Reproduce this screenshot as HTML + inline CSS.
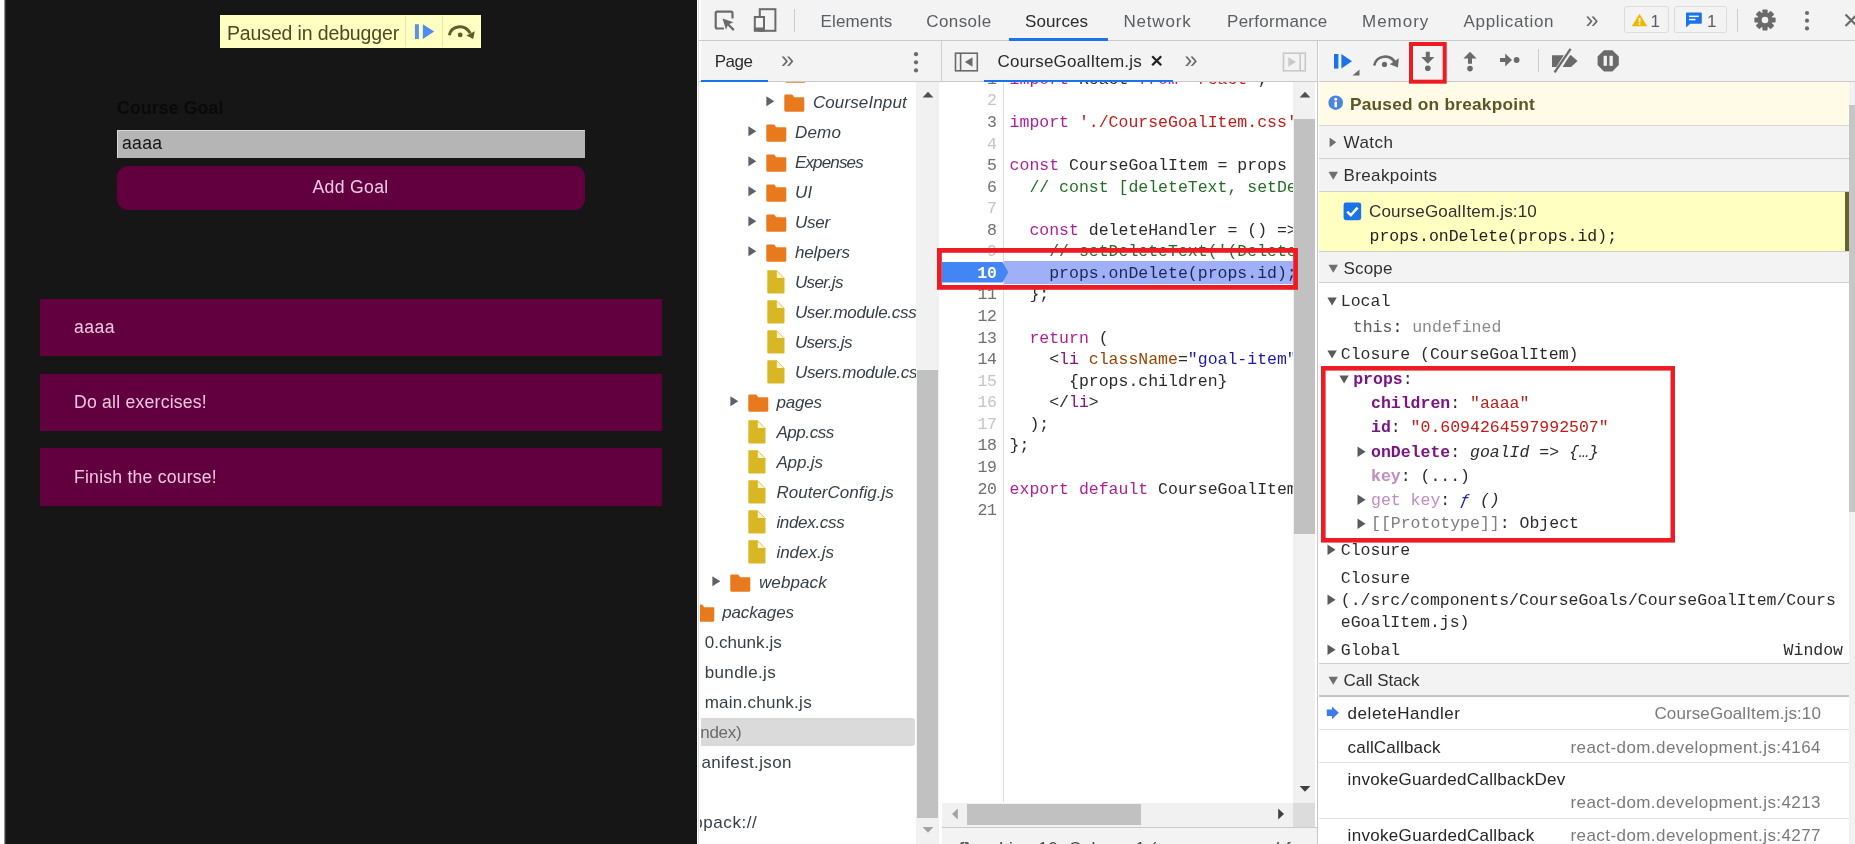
<!DOCTYPE html>
<html lang="en"><head><meta charset="utf-8"><title>DevTools - Paused in debugger</title>
<style>
html,body{margin:0;padding:0;background:#fff;}
body{width:1855px;height:844px;overflow:hidden;position:relative;}
.L{position:absolute;overflow:hidden;will-change:transform;}
.I{position:absolute;width:1855px;height:844px;}
.I>div,.I>svg,.I>span{position:absolute;}
.t{line-height:0;white-space:pre;}
</style></head>
<body>
<div class="L" style="left:0px;top:0px;width:697px;height:844px;"><div class="I" style="left:0px;top:0px">
<div style="left:0px;top:0px;width:697px;height:844px;background:#161616;"></div>
<div style="left:0px;top:0px;width:3.5px;height:844px;background:#ffffff;"></div>
<div style="left:3.5px;top:0px;width:2px;height:844px;background:linear-gradient(90deg,#bbb,#0a0a0a);"></div>
<div style="left:220px;top:15px;width:261px;height:33px;background:#ffffc2;"></div>
<div style="left:405.2px;top:16px;width:1px;height:31px;background:#e6e6b2;"></div>
<div style="left:442.2px;top:16px;width:1px;height:31px;background:#e6e6b2;"></div>
<span class="t" style="top:33.42px;font:19.5px/0 'Liberation Sans',sans-serif;color:#4a4a24;left:227px;letter-spacing:-0.142px;">Paused in debugger</span>
<svg style="left:413px;top:24px;" width="24" height="16" viewBox="0 0 24 16"><rect x="1.9" y="0.2" width="4" height="14.8" fill="#5a92e4"/><path d="M9.8 0.2 L21.2 7.6 L9.8 15 Z" fill="#4f8ef0"/></svg>
<svg style="left:447px;top:23px;" width="30" height="18" viewBox="0 0 30 18"><path d="M2.3 12.2 C4 3.4 17 -0.2 23.3 10.2" fill="none" stroke="#5f5c2e" stroke-width="3"/><path d="M27.8 8.2 L26.2 16 L19.4 12.6 Z" fill="#5f5c2e"/><circle cx="13.2" cy="11.9" r="2.4" fill="#5f5c2e"/></svg>
<span class="t" style="top:108.18px;font:bold 17.6px/0 'Liberation Sans',sans-serif;color:#0a0a0a;left:117px;letter-spacing:0.172px;">Course Goal</span>
<div style="left:117px;top:129.5px;width:468px;height:28.5px;background:#b5b5b5;box-shadow:inset 1px 1px 0 #d8d8d8;"></div>
<span class="t" style="top:143.18px;font:17.6px/0 'Liberation Sans',sans-serif;color:#151515;left:122px;letter-spacing:0.340px;">aaaa</span>
<div style="left:117px;top:166px;width:468px;height:43.5px;background:#62003f;border-radius:11px;"></div>
<span class="t" style="top:186.93px;font:17.6px/0 'Liberation Sans',sans-serif;color:#f2cbe6;left:312.5px;letter-spacing:0.330px;">Add Goal</span>
<div style="left:39.8px;top:298.8px;width:622.6px;height:56.8px;background:#62003f;"></div>
<span class="t" style="top:327.23px;font:17.6px/0 'Liberation Sans',sans-serif;color:#eec6e0;left:74px;letter-spacing:0.465px;">aaaa</span>
<div style="left:39.8px;top:373.6px;width:622.6px;height:57.2px;background:#62003f;"></div>
<span class="t" style="top:402.03px;font:17.6px/0 'Liberation Sans',sans-serif;color:#eec6e0;left:74px;letter-spacing:0.231px;">Do all exercises!</span>
<div style="left:39.8px;top:448.4px;width:622.6px;height:57.6px;background:#62003f;"></div>
<span class="t" style="top:476.83px;font:17.6px/0 'Liberation Sans',sans-serif;color:#eec6e0;left:74px;letter-spacing:0.229px;">Finish the course!</span>
</div></div>
<div class="L" style="left:697px;top:0px;width:1158px;height:844px;"><div class="I" style="left:-697px;top:0px">
<div style="left:697px;top:0px;width:1158px;height:844px;background:#ffffff;"></div>
<div style="left:698.4px;top:0px;width:1px;height:844px;background:#dcdcdc;"></div>
<div style="left:701px;top:0px;width:1154px;height:40px;background:#f3f3f3;"></div>
<div style="left:699px;top:40px;width:1156px;height:1px;background:#cacaca;"></div>
<div style="left:701px;top:41px;width:240px;height:40px;background:#f3f3f3;"></div>
<div style="left:942px;top:41px;width:375px;height:40px;background:#f3f3f3;"></div>
<div style="left:1319px;top:41px;width:536px;height:41px;background:#f3f3f3;"></div>
<div style="left:699px;top:81px;width:618px;height:1px;background:#cacaca;"></div>
<div style="left:1319px;top:81px;width:536px;height:1px;background:#cacaca;"></div>
<div style="left:941px;top:41px;width:1px;height:803px;background:#cfcfcf;"></div>
<div style="left:1316.6px;top:41px;width:1.2px;height:803px;background:#c6c6c6;"></div>
<svg style="left:713px;top:9px;" width="24" height="23" viewBox="0 0 24 23"><path d="M11 19.5 H4.2 Q2.7 19.5 2.7 18 V4.2 Q2.7 2.7 4.2 2.7 H18 Q19.5 2.7 19.5 4.2 V9.5" fill="none" stroke="#6a6a6a" stroke-width="2.2"/><path d="M9.5 9.5 L20.5 13.2 L16.3 15 L21.6 20.3 L20 21.9 L14.7 16.6 L13 20.8 Z" fill="#6a6a6a"/></svg>
<svg style="left:753px;top:7px;" width="25" height="26" viewBox="0 0 25 26"><rect x="6.8" y="2.2" width="15.6" height="21.6" fill="none" stroke="#6a6a6a" stroke-width="2"/><rect x="1.8" y="10" width="9.2" height="13.8" fill="#f3f3f3" stroke="#6a6a6a" stroke-width="2"/><rect x="1.8" y="20.5" width="9.2" height="3.3" fill="#6a6a6a"/></svg>
<div style="left:793.5px;top:9px;width:1px;height:22.5px;background:#cccccc;"></div>
<span class="t" style="top:21.62px;font:17px/0 'Liberation Sans',sans-serif;color:#5a5d62;left:820.5px;letter-spacing:0.141px;">Elements</span>
<span class="t" style="top:21.62px;font:17px/0 'Liberation Sans',sans-serif;color:#5a5d62;left:926.25px;letter-spacing:0.411px;">Console</span>
<span class="t" style="top:21.62px;font:17px/0 'Liberation Sans',sans-serif;color:#5a5d62;left:1123.5px;letter-spacing:0.806px;">Network</span>
<span class="t" style="top:21.62px;font:17px/0 'Liberation Sans',sans-serif;color:#5a5d62;left:1227px;letter-spacing:0.288px;">Performance</span>
<span class="t" style="top:21.62px;font:17px/0 'Liberation Sans',sans-serif;color:#5a5d62;left:1362px;letter-spacing:0.974px;">Memory</span>
<span class="t" style="top:21.62px;font:17px/0 'Liberation Sans',sans-serif;color:#5a5d62;left:1463.5px;letter-spacing:0.689px;">Application</span>
<span class="t" style="top:21.62px;font:17px/0 'Liberation Sans',sans-serif;color:#2b2b2b;left:1025px;letter-spacing:0.118px;">Sources</span>
<div style="left:1008.5px;top:37.5px;width:99.5px;height:3px;background:#1a73e8;"></div>
<span class="t" style="top:19.86px;font:23.5px/0 'Liberation Sans',sans-serif;color:#6a6a6a;left:1585.5px;">»</span>
<div style="left:1623.5px;top:6px;width:45.5px;height:27px;background:#f3f3f3;border:1px solid #dcdcdc;border-radius:3px;box-sizing:border-box;"></div>
<svg style="left:1630.5px;top:13px;" width="18" height="14" viewBox="0 0 18 14"><path d="M8.5 0.8 L16.2 13.2 H0.8 Z" fill="#f2b600"/><rect x="7.7" y="5" width="1.7" height="4.3" fill="#fff"/><rect x="7.7" y="10.2" width="1.7" height="1.6" fill="#fff"/></svg>
<span class="t" style="top:21.62px;font:17px/0 'Liberation Sans',sans-serif;color:#5a5d62;left:1650.5px;">1</span>
<div style="left:1674px;top:6px;width:53px;height:27px;background:#f3f3f3;border:1px solid #dcdcdc;border-radius:3px;box-sizing:border-box;"></div>
<svg style="left:1685px;top:12px;" width="18" height="16" viewBox="0 0 18 16"><path d="M1 1.5 Q1 0.5 2 0.5 H15.8 Q16.8 0.5 16.8 1.5 V10.8 Q16.8 11.8 15.8 11.8 H5.2 L1 15.4 Z" fill="#1a73e8"/><rect x="4" y="3.6" width="9.8" height="1.5" fill="#fff"/><rect x="4" y="6.8" width="6.5" height="1.5" fill="#fff"/></svg>
<span class="t" style="top:21.62px;font:17px/0 'Liberation Sans',sans-serif;color:#5a5d62;left:1707px;">1</span>
<div style="left:1736.5px;top:9px;width:1px;height:22.5px;background:#cccccc;"></div>
<svg style="left:1753.7px;top:9px;" width="22" height="22" viewBox="0 0 22 22"><g transform="translate(11,11)"><rect x="-2.6" y="-10.6" width="5.2" height="6" rx="0.8" fill="#6a6a6a" transform="rotate(0)"/><rect x="-2.6" y="-10.6" width="5.2" height="6" rx="0.8" fill="#6a6a6a" transform="rotate(45)"/><rect x="-2.6" y="-10.6" width="5.2" height="6" rx="0.8" fill="#6a6a6a" transform="rotate(90)"/><rect x="-2.6" y="-10.6" width="5.2" height="6" rx="0.8" fill="#6a6a6a" transform="rotate(135)"/><rect x="-2.6" y="-10.6" width="5.2" height="6" rx="0.8" fill="#6a6a6a" transform="rotate(180)"/><rect x="-2.6" y="-10.6" width="5.2" height="6" rx="0.8" fill="#6a6a6a" transform="rotate(225)"/><rect x="-2.6" y="-10.6" width="5.2" height="6" rx="0.8" fill="#6a6a6a" transform="rotate(270)"/><rect x="-2.6" y="-10.6" width="5.2" height="6" rx="0.8" fill="#6a6a6a" transform="rotate(315)"/><circle r="7.6" fill="#6a6a6a"/><circle r="3.3" fill="#f3f3f3"/></g></svg>
<svg style="left:1803px;top:9px;" width="8" height="24" viewBox="0 0 8 24"><circle cx="4" cy="4" r="2.1" fill="#6a6a6a"/><circle cx="4" cy="11.7" r="2.1" fill="#6a6a6a"/><circle cx="4" cy="19.4" r="2.1" fill="#6a6a6a"/></svg>
<svg style="left:1843px;top:12px;" width="14" height="16" viewBox="0 0 14 16"><path d="M2.5 2.5 L14 14 M14 2.5 L2.5 14" stroke="#6a6a6a" stroke-width="2.2" fill="none"/></svg>
<span class="t" style="top:62.42px;font:17px/0 'Liberation Sans',sans-serif;color:#2b2b2b;left:714.8px;letter-spacing:-0.551px;">Page</span>
<div style="left:700.5px;top:79.5px;width:67.5px;height:2.5px;background:#1a73e8;"></div>
<span class="t" style="top:60.16px;font:23.5px/0 'Liberation Sans',sans-serif;color:#6a6a6a;left:781px;">»</span>
<svg style="left:912px;top:49.5px;" width="8" height="24" viewBox="0 0 8 24"><circle cx="4" cy="4.2" r="2.1" fill="#6a6a6a"/><circle cx="4" cy="12.3" r="2.1" fill="#6a6a6a"/><circle cx="4" cy="20.4" r="2.1" fill="#6a6a6a"/></svg>
<svg style="left:954px;top:51.5px;" width="25" height="20" viewBox="0 0 25 20"><rect x="1.5" y="1.2" width="21.8" height="17.6" fill="none" stroke="#6a6a6a" stroke-width="1.6"/><path d="M6.6 1.2 V18.8" stroke="#6a6a6a" stroke-width="1.6"/><path d="M18.5 5.2 V14.8 L10.8 10 Z" fill="#6a6a6a"/></svg>
<span class="t" style="top:62.42px;font:17px/0 'Liberation Sans',sans-serif;color:#2b2b2b;left:997.5px;letter-spacing:0.219px;">CourseGoalItem.js</span>
<svg style="left:1150px;top:54px;" width="14" height="14" viewBox="0 0 14 14"><path d="M2.2 2.2 L11.2 11.2 M11.2 2.2 L2.2 11.2" stroke="#222" stroke-width="2.3" fill="none"/></svg>
<div style="left:983.5px;top:79.5px;width:189px;height:2.5px;background:#1a73e8;"></div>
<span class="t" style="top:60.16px;font:23.5px/0 'Liberation Sans',sans-serif;color:#6a6a6a;left:1184.5px;">»</span>
<svg style="left:1282px;top:51.5px;" width="25" height="20" viewBox="0 0 25 20"><rect x="1.5" y="1.2" width="21.8" height="17.6" fill="none" stroke="#c8c8c8" stroke-width="1.6"/><path d="M18.2 1.2 V18.8" stroke="#c8c8c8" stroke-width="1.6"/><path d="M6.3 5.2 V14.8 L14 10 Z" fill="#c8c8c8"/></svg>
<svg style="left:1332px;top:52px;" width="30" height="26" viewBox="0 0 30 26"><rect x="2" y="2" width="4.4" height="14.6" fill="#1a73e8"/><path d="M9.4 2 L20 9.3 L9.4 16.6 Z" fill="#1a73e8"/><path d="M27.5 17.5 V23.5 H20.5 Z" fill="#6a6a6a"/></svg>
<svg style="left:1371px;top:51px;" width="30" height="20" viewBox="0 0 30 20"><path d="M3.2 14.5 C5.5 4 19.5 2.5 24.3 12" fill="none" stroke="#6a6a6a" stroke-width="2.7"/><path d="M27.8 7.2 L27 16.4 L18.8 13.2 Z" fill="#6a6a6a"/><circle cx="13.5" cy="13.4" r="2.6" fill="#6a6a6a"/></svg>
<svg style="left:1420px;top:51px;" width="16" height="22" viewBox="0 0 16 22"><path d="M5.8 0.8 H9.8 V6 H14.4 L7.8 12.8 L1.2 6 H5.8 Z" fill="#6a6a6a"/><circle cx="7.8" cy="17.3" r="2.8" fill="#6a6a6a"/></svg>
<svg style="left:1462px;top:51px;" width="16" height="22" viewBox="0 0 16 22"><path d="M6 12.8 H10 V7.6 H14.6 L8 0.8 L1.4 7.6 H6 Z" fill="#6a6a6a"/><circle cx="8" cy="17.6" r="2.8" fill="#6a6a6a"/></svg>
<svg style="left:1498px;top:52px;" width="24" height="16" viewBox="0 0 24 16"><path d="M2 6 H7.2 V1.6 L14 8 L7.2 14.4 V10 H2 Z" fill="#6a6a6a"/><circle cx="18.6" cy="8" r="2.9" fill="#6a6a6a"/></svg>
<div style="left:1537.5px;top:48.5px;width:1px;height:23px;background:#cccccc;"></div>
<svg style="left:1550px;top:47px;" width="30" height="27" viewBox="0 0 30 27"><path d="M2 8.2 H21 L27.6 14.1 L21 20 H2 Z" fill="#6a6a6a"/><path d="M21.5 0.8 L5.5 26.2" stroke="#f3f3f3" stroke-width="5.2"/><path d="M20.6 1.8 L4.6 25.4" stroke="#6a6a6a" stroke-width="2.3"/></svg>
<svg style="left:1596px;top:49px;" width="24" height="24" viewBox="0 0 24 24"><path d="M8 1.2 H16.4 L22.8 7.6 V16 L16.4 22.4 H8 L1.6 16 V7.6 Z" fill="#6a6a6a"/><rect x="7.6" y="6.8" width="3.3" height="10" fill="#f3f3f3"/><rect x="13.5" y="6.8" width="3.3" height="10" fill="#f3f3f3"/></svg>
</div></div>
<div class="L" style="left:1319px;top:82px;width:536px;height:762px;"><div class="I" style="left:-1319px;top:-82px">
<div style="left:1319px;top:82px;width:536px;height:762px;background:#ffffff;"></div>
<div style="left:1848.5px;top:82px;width:6.5px;height:762px;background:#f1f1f1;"></div>
<div style="left:1848.5px;top:105px;width:6.5px;height:407px;background:#c6c6c6;"></div>
<div style="left:1319px;top:82px;width:529.5px;height:42.5px;background:#fffbe6;"></div>
<div style="left:1319px;top:124.5px;width:529.5px;height:1px;background:#d8d8d8;"></div>
<svg style="left:1327.5px;top:94.8px;" width="16" height="16" viewBox="0 0 16 16"><circle cx="7.7" cy="7.7" r="7.3" fill="#4a86e0"/><rect x="6.5" y="6.6" width="2.5" height="5.6" fill="#fff"/><circle cx="7.75" cy="4.2" r="1.45" fill="#fff"/></svg>
<span class="t" style="top:103.52px;font:bold 17.3px/0 'Liberation Sans',sans-serif;color:#5c5625;left:1350px;letter-spacing:0.223px;">Paused on breakpoint</span>
<div style="left:1319px;top:125.5px;width:529.5px;height:32.5px;background:#f3f3f3;"></div>
<div style="left:1319px;top:158px;width:529.5px;height:1px;background:#cfcfcf;"></div>
<svg style="left:1329px;top:137.25px;" width="8" height="11" viewBox="0 0 8 11"><path d="M0.6 0.5 V10.2 L7.2 5.35 Z" fill="#6e6e6e"/></svg>
<span class="t" style="top:143.37px;font:17px/0 'Liberation Sans',sans-serif;color:#303030;left:1343.5px;letter-spacing:0.491px;">Watch</span>
<div style="left:1319px;top:159px;width:529.5px;height:32px;background:#f3f3f3;"></div>
<div style="left:1319px;top:191px;width:529.5px;height:1px;background:#cfcfcf;"></div>
<svg style="left:1328px;top:171.25px;" width="11" height="9" viewBox="0 0 11 9"><path d="M0.5 0.8 H10 L5.25 8.8 Z" fill="#6e6e6e"/></svg>
<span class="t" style="top:176.37px;font:17px/0 'Liberation Sans',sans-serif;color:#303030;left:1343.5px;letter-spacing:0.384px;">Breakpoints</span>
<div style="left:1319px;top:192px;width:529.5px;height:58.5px;background:#ffffc2;"></div>
<div style="left:1844.75px;top:192px;width:3.75px;height:58.5px;background:#6b6130;"></div>
<div style="left:1319px;top:250.5px;width:529.5px;height:1px;background:#cfcfcf;"></div>
<svg style="left:1342.5px;top:201.5px;" width="19" height="19" viewBox="0 0 19 19"><rect x="0.6" y="0.6" width="17.6" height="17.6" rx="2.4" fill="#1a73e8"/><path d="M4.2 9.6 L7.8 13.2 L14.6 5.6" fill="none" stroke="#fff" stroke-width="2.4"/></svg>
<span class="t" style="top:211.82px;font:17px/0 'Liberation Sans',sans-serif;color:#303030;left:1369px;letter-spacing:0.180px;">CourseGoalItem.js:10</span>
<span class="t" style="top:236.61px;font:16.5px/0 'Liberation Mono',monospace;color:#222;left:1369.5px;">props.onDelete(props.id);</span>
<div style="left:1319px;top:252px;width:529.5px;height:30.3px;background:#f3f3f3;"></div>
<div style="left:1319px;top:282.3px;width:529.5px;height:1px;background:#cfcfcf;"></div>
<svg style="left:1328px;top:264.25px;" width="11" height="9" viewBox="0 0 11 9"><path d="M0.5 0.8 H10 L5.25 8.8 Z" fill="#6e6e6e"/></svg>
<span class="t" style="top:269.37px;font:17px/0 'Liberation Sans',sans-serif;color:#303030;left:1343.5px;letter-spacing:0.159px;">Scope</span>
<svg style="left:1326.8px;top:297.45px;" width="11" height="9" viewBox="0 0 11 9"><path d="M0.4 0.6 H9.8 L5.1 8.4 Z" fill="#5a5a5a"/></svg>
<span class="t" style="top:302.36px;font:16.5px/0 'Liberation Mono',monospace;color:#2b2b2b;left:1340.8px;">Local</span>
<span class="t" style="top:328.36px;font:16.5px/0 'Liberation Mono',monospace;color:#5a5a5a;left:1352.8px;">this</span>
<span class="t" style="top:328.36px;font:16.5px/0 'Liberation Mono',monospace;color:#2b2b2b;left:1392.41px;">: </span>
<span class="t" style="top:328.36px;font:16.5px/0 'Liberation Mono',monospace;color:#8a8a8a;left:1412.21px;">undefined</span>
<svg style="left:1326.8px;top:349.7px;" width="11" height="9" viewBox="0 0 11 9"><path d="M0.4 0.6 H9.8 L5.1 8.4 Z" fill="#5a5a5a"/></svg>
<span class="t" style="top:354.61px;font:16.5px/0 'Liberation Mono',monospace;color:#2b2b2b;left:1340.8px;">Closure (CourseGoalItem)</span>
<svg style="left:1338.6px;top:375.45px;" width="11" height="9" viewBox="0 0 11 9"><path d="M0.4 0.6 H9.8 L5.1 8.4 Z" fill="#5a5a5a"/></svg>
<span class="t" style="top:380.36px;font:bold 16.5px/0 'Liberation Mono',monospace;color:#7b1285;left:1353.2px;">props</span>
<span class="t" style="top:380.36px;font:16.5px/0 'Liberation Mono',monospace;color:#2b2b2b;left:1402.71px;">:</span>
<span class="t" style="top:404.11px;font:bold 16.5px/0 'Liberation Mono',monospace;color:#7b1285;left:1371px;">children</span>
<span class="t" style="top:404.11px;font:16.5px/0 'Liberation Mono',monospace;color:#2b2b2b;left:1450.21px;">: </span>
<span class="t" style="top:404.11px;font:16.5px/0 'Liberation Mono',monospace;color:#c41a16;left:1470.02px;">"aaaa"</span>
<span class="t" style="top:428.11px;font:bold 16.5px/0 'Liberation Mono',monospace;color:#7b1285;left:1371px;">id</span>
<span class="t" style="top:428.11px;font:16.5px/0 'Liberation Mono',monospace;color:#2b2b2b;left:1390.8px;">: </span>
<span class="t" style="top:428.11px;font:16.5px/0 'Liberation Mono',monospace;color:#c41a16;left:1410.61px;">"0.6094264597992507"</span>
<svg style="left:1357.3px;top:446px;" width="10" height="12" viewBox="0 0 10 12"><path d="M0.5 0.4 V11 L8.6 5.7 Z" fill="#5a5a5a"/></svg>
<span class="t" style="top:452.61px;font:bold 16.5px/0 'Liberation Mono',monospace;color:#7b1285;left:1371px;">onDelete</span>
<span class="t" style="top:452.61px;font:16.5px/0 'Liberation Mono',monospace;color:#2b2b2b;left:1450.21px;">: </span>
<span class="t" style="top:452.61px;font:italic 16.5px/0 'Liberation Mono',monospace;color:#2b2b2b;left:1470.02px;">goalId =&gt; {…}</span>
<span class="t" style="top:476.86px;font:bold 16.5px/0 'Liberation Mono',monospace;color:#c08ac4;left:1371px;">key</span>
<span class="t" style="top:476.86px;font:16.5px/0 'Liberation Mono',monospace;color:#2b2b2b;left:1400.7px;">: (...)</span>
<svg style="left:1357.3px;top:494px;" width="10" height="12" viewBox="0 0 10 12"><path d="M0.5 0.4 V11 L8.6 5.7 Z" fill="#5a5a5a"/></svg>
<span class="t" style="top:500.61px;font:16.5px/0 'Liberation Mono',monospace;color:#c08ac4;left:1371px;">get key</span>
<span class="t" style="top:500.61px;font:16.5px/0 'Liberation Mono',monospace;color:#2b2b2b;left:1440.31px;">: </span>
<span class="t" style="top:500.61px;font:italic 16.5px/0 'Liberation Mono',monospace;color:#1c2a9c;left:1460.11px;">ƒ </span>
<span class="t" style="top:500.61px;font:italic 16.5px/0 'Liberation Mono',monospace;color:#2b2b2b;left:1479.92px;">()</span>
<svg style="left:1357.3px;top:517.75px;" width="10" height="12" viewBox="0 0 10 12"><path d="M0.5 0.4 V11 L8.6 5.7 Z" fill="#5a5a5a"/></svg>
<span class="t" style="top:524.36px;font:16.5px/0 'Liberation Mono',monospace;color:#7d7d7d;left:1371px;">[[Prototype]]</span>
<span class="t" style="top:524.36px;font:16.5px/0 'Liberation Mono',monospace;color:#2b2b2b;left:1499.72px;">: Object</span>
<svg style="left:1327.3px;top:544px;" width="10" height="12" viewBox="0 0 10 12"><path d="M0.5 0.4 V11 L8.6 5.7 Z" fill="#5a5a5a"/></svg>
<span class="t" style="top:550.61px;font:16.5px/0 'Liberation Mono',monospace;color:#2b2b2b;left:1340.8px;">Closure</span>
<span class="t" style="top:578.61px;font:16.5px/0 'Liberation Mono',monospace;color:#2b2b2b;left:1340.8px;">Closure</span>
<svg style="left:1327.3px;top:594px;" width="10" height="12" viewBox="0 0 10 12"><path d="M0.5 0.4 V11 L8.6 5.7 Z" fill="#5a5a5a"/></svg>
<span class="t" style="top:600.61px;font:16.5px/0 'Liberation Mono',monospace;color:#2b2b2b;left:1340.8px;">(./src/components/CourseGoals/CourseGoalItem/Cours</span>
<span class="t" style="top:622.61px;font:16.5px/0 'Liberation Mono',monospace;color:#2b2b2b;left:1340.8px;">eGoalItem.js)</span>
<svg style="left:1327.3px;top:644px;" width="10" height="12" viewBox="0 0 10 12"><path d="M0.5 0.4 V11 L8.6 5.7 Z" fill="#5a5a5a"/></svg>
<span class="t" style="top:650.61px;font:16.5px/0 'Liberation Mono',monospace;color:#2b2b2b;left:1340.8px;">Global</span>
<span class="t" style="top:650.61px;font:16.5px/0 'Liberation Mono',monospace;color:#2b2b2b;right:12px;">Window</span>
<svg style="left:1321.2px;top:366.4px;" width="354.1" height="176.6" viewBox="0 0 354.1 176.6"><rect x="2.3" y="2.3" width="349.5" height="172" fill="none" stroke="#ed1c24" stroke-width="4.6"/></svg>
<div style="left:1319px;top:663px;width:529.5px;height:1px;background:#cfcfcf;"></div>
<div style="left:1319px;top:664px;width:529.5px;height:31px;background:#f3f3f3;"></div>
<div style="left:1319px;top:695px;width:529.5px;height:1.8px;background:#c4c4c4;"></div>
<svg style="left:1328px;top:676.25px;" width="11" height="9" viewBox="0 0 11 9"><path d="M0.5 0.8 H10 L5.25 8.8 Z" fill="#6e6e6e"/></svg>
<span class="t" style="top:681.37px;font:17px/0 'Liberation Sans',sans-serif;color:#303030;left:1343.5px;letter-spacing:-0.053px;">Call Stack</span>
<svg style="left:1325.5px;top:706px;" width="14" height="14" viewBox="0 0 14 14"><path d="M0.8 3.6 H6 V0.4 L12.8 6.8 L6 13.2 V10 H0.8 Z" fill="#3b7de9"/></svg>
<span class="t" style="top:714.37px;font:17px/0 'Liberation Sans',sans-serif;color:#262626;left:1347.6px;letter-spacing:0.549px;">deleteHandler</span>
<span class="t" style="top:714.37px;font:17px/0 'Liberation Sans',sans-serif;color:#7a7a7a;right:34px;letter-spacing:0.105px;">CourseGoalItem.js:10</span>
<div style="left:1319px;top:729px;width:529.5px;height:1px;background:#e2e2e2;"></div>
<span class="t" style="top:747.62px;font:17px/0 'Liberation Sans',sans-serif;color:#262626;left:1347.6px;letter-spacing:0.191px;">callCallback</span>
<span class="t" style="top:748.02px;font:17px/0 'Liberation Sans',sans-serif;color:#7a7a7a;right:34px;letter-spacing:0.426px;">react-dom.development.js:4164</span>
<div style="left:1319px;top:762.3px;width:529.5px;height:1px;background:#e2e2e2;"></div>
<span class="t" style="top:780.12px;font:17px/0 'Liberation Sans',sans-serif;color:#262626;left:1347.6px;letter-spacing:0.303px;">invokeGuardedCallbackDev</span>
<span class="t" style="top:803.12px;font:17px/0 'Liberation Sans',sans-serif;color:#7a7a7a;right:34px;letter-spacing:0.426px;">react-dom.development.js:4213</span>
<div style="left:1319px;top:818.3px;width:529.5px;height:1px;background:#e2e2e2;"></div>
<span class="t" style="top:836.22px;font:17px/0 'Liberation Sans',sans-serif;color:#262626;left:1347.6px;letter-spacing:0.310px;">invokeGuardedCallback</span>
<span class="t" style="top:836.22px;font:17px/0 'Liberation Sans',sans-serif;color:#7a7a7a;right:34px;letter-spacing:0.426px;">react-dom.development.js:4277</span>
</div></div>
<div class="L" style="left:699.5px;top:82px;width:216px;height:762px;"><div class="I" style="left:-699.5px;top:-82px">
<div style="left:700.5px;top:718px;width:214.3px;height:28px;background:#dadada;border-radius:0 3px 3px 0;"></div>
<svg style="left:784px;top:64.5px;" width="21" height="18" viewBox="0 0 21 18"><path d="M0.3 1.6 Q0.3 0.4 1.5 0.4 H8.2 L10.2 3.2 H19.2 Q20.3 3.2 20.3 4.4 V16.6 Q20.3 17.7 19.2 17.7 H1.5 Q0.3 17.7 0.3 16.6 Z" fill="#e8791c"/></svg>
<svg style="left:783.8px;top:94.2px;" width="21" height="18" viewBox="0 0 21 18"><path d="M0.3 1.6 Q0.3 0.4 1.5 0.4 H8.2 L10.2 3.2 H19.2 Q20.3 3.2 20.3 4.4 V16.6 Q20.3 17.7 19.2 17.7 H1.5 Q0.3 17.7 0.3 16.6 Z" fill="#e8791c"/></svg>
<svg style="left:765.8px;top:96.3px;" width="9" height="11" viewBox="0 0 9 11"><path d="M0.4 0.3 V10.3 L8.3 5.3 Z" fill="#5c616b"/></svg>
<span class="t" style="top:103.37px;font:italic 17px/0 'Liberation Sans',sans-serif;color:#363e47;left:812.4px;letter-spacing:0.125px;">CourseInput</span>
<svg style="left:765.8px;top:124.2px;" width="21" height="18" viewBox="0 0 21 18"><path d="M0.3 1.6 Q0.3 0.4 1.5 0.4 H8.2 L10.2 3.2 H19.2 Q20.3 3.2 20.3 4.4 V16.6 Q20.3 17.7 19.2 17.7 H1.5 Q0.3 17.7 0.3 16.6 Z" fill="#e8791c"/></svg>
<svg style="left:747.8px;top:126.3px;" width="9" height="11" viewBox="0 0 9 11"><path d="M0.4 0.3 V10.3 L8.3 5.3 Z" fill="#5c616b"/></svg>
<span class="t" style="top:133.37px;font:italic 17px/0 'Liberation Sans',sans-serif;color:#363e47;left:794.4px;letter-spacing:0.223px;">Demo</span>
<svg style="left:765.8px;top:154.2px;" width="21" height="18" viewBox="0 0 21 18"><path d="M0.3 1.6 Q0.3 0.4 1.5 0.4 H8.2 L10.2 3.2 H19.2 Q20.3 3.2 20.3 4.4 V16.6 Q20.3 17.7 19.2 17.7 H1.5 Q0.3 17.7 0.3 16.6 Z" fill="#e8791c"/></svg>
<svg style="left:747.8px;top:156.3px;" width="9" height="11" viewBox="0 0 9 11"><path d="M0.4 0.3 V10.3 L8.3 5.3 Z" fill="#5c616b"/></svg>
<span class="t" style="top:163.37px;font:italic 17px/0 'Liberation Sans',sans-serif;color:#363e47;left:794.4px;letter-spacing:-0.834px;">Expenses</span>
<svg style="left:765.8px;top:184.2px;" width="21" height="18" viewBox="0 0 21 18"><path d="M0.3 1.6 Q0.3 0.4 1.5 0.4 H8.2 L10.2 3.2 H19.2 Q20.3 3.2 20.3 4.4 V16.6 Q20.3 17.7 19.2 17.7 H1.5 Q0.3 17.7 0.3 16.6 Z" fill="#e8791c"/></svg>
<svg style="left:747.8px;top:186.3px;" width="9" height="11" viewBox="0 0 9 11"><path d="M0.4 0.3 V10.3 L8.3 5.3 Z" fill="#5c616b"/></svg>
<span class="t" style="top:193.37px;font:italic 17px/0 'Liberation Sans',sans-serif;color:#363e47;left:794.4px;letter-spacing:0.250px;">UI</span>
<svg style="left:765.8px;top:214.2px;" width="21" height="18" viewBox="0 0 21 18"><path d="M0.3 1.6 Q0.3 0.4 1.5 0.4 H8.2 L10.2 3.2 H19.2 Q20.3 3.2 20.3 4.4 V16.6 Q20.3 17.7 19.2 17.7 H1.5 Q0.3 17.7 0.3 16.6 Z" fill="#e8791c"/></svg>
<svg style="left:747.8px;top:216.3px;" width="9" height="11" viewBox="0 0 9 11"><path d="M0.4 0.3 V10.3 L8.3 5.3 Z" fill="#5c616b"/></svg>
<span class="t" style="top:223.37px;font:italic 17px/0 'Liberation Sans',sans-serif;color:#363e47;left:794.4px;letter-spacing:-0.227px;">User</span>
<svg style="left:765.8px;top:244.2px;" width="21" height="18" viewBox="0 0 21 18"><path d="M0.3 1.6 Q0.3 0.4 1.5 0.4 H8.2 L10.2 3.2 H19.2 Q20.3 3.2 20.3 4.4 V16.6 Q20.3 17.7 19.2 17.7 H1.5 Q0.3 17.7 0.3 16.6 Z" fill="#e8791c"/></svg>
<svg style="left:747.8px;top:246.3px;" width="9" height="11" viewBox="0 0 9 11"><path d="M0.4 0.3 V10.3 L8.3 5.3 Z" fill="#5c616b"/></svg>
<span class="t" style="top:253.37px;font:italic 17px/0 'Liberation Sans',sans-serif;color:#363e47;left:794.4px;letter-spacing:-0.109px;">helpers</span>
<svg style="left:766.4px;top:269.9px;" width="18" height="24" viewBox="0 0 18 24"><path d="M0.3 1 Q0.3 0.3 1 0.3 H9.6 L17.5 8.2 V22.6 Q17.5 23.4 16.7 23.4 H1 Q0.3 23.4 0.3 22.6 Z" fill="#d9b724"/><path d="M9.8 1.2 V8 H16.6 Z" fill="#fbf4d0"/></svg>
<span class="t" style="top:283.37px;font:italic 17px/0 'Liberation Sans',sans-serif;color:#363e47;left:794.4px;letter-spacing:-0.609px;">User.js</span>
<svg style="left:766.4px;top:299.9px;" width="18" height="24" viewBox="0 0 18 24"><path d="M0.3 1 Q0.3 0.3 1 0.3 H9.6 L17.5 8.2 V22.6 Q17.5 23.4 16.7 23.4 H1 Q0.3 23.4 0.3 22.6 Z" fill="#d9b724"/><path d="M9.8 1.2 V8 H16.6 Z" fill="#fbf4d0"/></svg>
<span class="t" style="top:313.37px;font:italic 17px/0 'Liberation Sans',sans-serif;color:#363e47;left:794.4px;letter-spacing:-0.298px;">User.module.css</span>
<svg style="left:766.4px;top:329.9px;" width="18" height="24" viewBox="0 0 18 24"><path d="M0.3 1 Q0.3 0.3 1 0.3 H9.6 L17.5 8.2 V22.6 Q17.5 23.4 16.7 23.4 H1 Q0.3 23.4 0.3 22.6 Z" fill="#d9b724"/><path d="M9.8 1.2 V8 H16.6 Z" fill="#fbf4d0"/></svg>
<span class="t" style="top:343.37px;font:italic 17px/0 'Liberation Sans',sans-serif;color:#363e47;left:794.4px;letter-spacing:-0.551px;">Users.js</span>
<svg style="left:766.4px;top:359.9px;" width="18" height="24" viewBox="0 0 18 24"><path d="M0.3 1 Q0.3 0.3 1 0.3 H9.6 L17.5 8.2 V22.6 Q17.5 23.4 16.7 23.4 H1 Q0.3 23.4 0.3 22.6 Z" fill="#d9b724"/><path d="M9.8 1.2 V8 H16.6 Z" fill="#fbf4d0"/></svg>
<span class="t" style="top:373.37px;font:italic 17px/0 'Liberation Sans',sans-serif;color:#363e47;left:794.4px;letter-spacing:-0.288px;">Users.module.css</span>
<svg style="left:747.3px;top:394.2px;" width="21" height="18" viewBox="0 0 21 18"><path d="M0.3 1.6 Q0.3 0.4 1.5 0.4 H8.2 L10.2 3.2 H19.2 Q20.3 3.2 20.3 4.4 V16.6 Q20.3 17.7 19.2 17.7 H1.5 Q0.3 17.7 0.3 16.6 Z" fill="#e8791c"/></svg>
<svg style="left:729.3px;top:396.3px;" width="9" height="11" viewBox="0 0 9 11"><path d="M0.4 0.3 V10.3 L8.3 5.3 Z" fill="#5c616b"/></svg>
<span class="t" style="top:403.37px;font:italic 17px/0 'Liberation Sans',sans-serif;color:#363e47;left:775.9px;letter-spacing:-0.166px;">pages</span>
<svg style="left:747.9px;top:419.9px;" width="18" height="24" viewBox="0 0 18 24"><path d="M0.3 1 Q0.3 0.3 1 0.3 H9.6 L17.5 8.2 V22.6 Q17.5 23.4 16.7 23.4 H1 Q0.3 23.4 0.3 22.6 Z" fill="#d9b724"/><path d="M9.8 1.2 V8 H16.6 Z" fill="#fbf4d0"/></svg>
<span class="t" style="top:433.37px;font:italic 17px/0 'Liberation Sans',sans-serif;color:#363e47;left:775.9px;letter-spacing:-0.426px;">App.css</span>
<svg style="left:747.9px;top:449.9px;" width="18" height="24" viewBox="0 0 18 24"><path d="M0.3 1 Q0.3 0.3 1 0.3 H9.6 L17.5 8.2 V22.6 Q17.5 23.4 16.7 23.4 H1 Q0.3 23.4 0.3 22.6 Z" fill="#d9b724"/><path d="M9.8 1.2 V8 H16.6 Z" fill="#fbf4d0"/></svg>
<span class="t" style="top:463.37px;font:italic 17px/0 'Liberation Sans',sans-serif;color:#363e47;left:775.9px;letter-spacing:-0.125px;">App.js</span>
<svg style="left:747.9px;top:479.9px;" width="18" height="24" viewBox="0 0 18 24"><path d="M0.3 1 Q0.3 0.3 1 0.3 H9.6 L17.5 8.2 V22.6 Q17.5 23.4 16.7 23.4 H1 Q0.3 23.4 0.3 22.6 Z" fill="#d9b724"/><path d="M9.8 1.2 V8 H16.6 Z" fill="#fbf4d0"/></svg>
<span class="t" style="top:493.37px;font:italic 17px/0 'Liberation Sans',sans-serif;color:#363e47;left:775.9px;letter-spacing:0.022px;">RouterConfig.js</span>
<svg style="left:747.9px;top:509.9px;" width="18" height="24" viewBox="0 0 18 24"><path d="M0.3 1 Q0.3 0.3 1 0.3 H9.6 L17.5 8.2 V22.6 Q17.5 23.4 16.7 23.4 H1 Q0.3 23.4 0.3 22.6 Z" fill="#d9b724"/><path d="M9.8 1.2 V8 H16.6 Z" fill="#fbf4d0"/></svg>
<span class="t" style="top:523.37px;font:italic 17px/0 'Liberation Sans',sans-serif;color:#363e47;left:775.9px;letter-spacing:-0.319px;">index.css</span>
<svg style="left:747.9px;top:539.9px;" width="18" height="24" viewBox="0 0 18 24"><path d="M0.3 1 Q0.3 0.3 1 0.3 H9.6 L17.5 8.2 V22.6 Q17.5 23.4 16.7 23.4 H1 Q0.3 23.4 0.3 22.6 Z" fill="#d9b724"/><path d="M9.8 1.2 V8 H16.6 Z" fill="#fbf4d0"/></svg>
<span class="t" style="top:553.37px;font:italic 17px/0 'Liberation Sans',sans-serif;color:#363e47;left:775.9px;letter-spacing:-0.018px;">index.js</span>
<svg style="left:729.8px;top:574.2px;" width="21" height="18" viewBox="0 0 21 18"><path d="M0.3 1.6 Q0.3 0.4 1.5 0.4 H8.2 L10.2 3.2 H19.2 Q20.3 3.2 20.3 4.4 V16.6 Q20.3 17.7 19.2 17.7 H1.5 Q0.3 17.7 0.3 16.6 Z" fill="#e8791c"/></svg>
<svg style="left:711.8px;top:576.3px;" width="9" height="11" viewBox="0 0 9 11"><path d="M0.4 0.3 V10.3 L8.3 5.3 Z" fill="#5c616b"/></svg>
<span class="t" style="top:583.37px;font:italic 17px/0 'Liberation Sans',sans-serif;color:#363e47;left:758.4px;letter-spacing:0.127px;">webpack</span>
<svg style="left:693.05px;top:604.2px;" width="21" height="18" viewBox="0 0 21 18"><path d="M0.3 1.6 Q0.3 0.4 1.5 0.4 H8.2 L10.2 3.2 H19.2 Q20.3 3.2 20.3 4.4 V16.6 Q20.3 17.7 19.2 17.7 H1.5 Q0.3 17.7 0.3 16.6 Z" fill="#e8791c"/></svg>
<span class="t" style="top:613.37px;font:italic 17px/0 'Liberation Sans',sans-serif;color:#363e47;left:721.65px;letter-spacing:-0.129px;">packages</span>
<span class="t" style="top:643.37px;font:17px/0 'Liberation Sans',sans-serif;color:#363e47;left:704.15px;letter-spacing:0.070px;">0.chunk.js</span>
<span class="t" style="top:673.37px;font:17px/0 'Liberation Sans',sans-serif;color:#363e47;left:704.15px;letter-spacing:0.382px;">bundle.js</span>
<span class="t" style="top:703.37px;font:17px/0 'Liberation Sans',sans-serif;color:#363e47;left:704.15px;letter-spacing:0.255px;">main.chunk.js</span>
<span class="t" style="top:733.37px;font:17px/0 'Liberation Sans',sans-serif;color:#6a6a6a;left:690.9px;letter-spacing:-0.281px;">(index)</span>
<span class="t" style="top:763.37px;font:17px/0 'Liberation Sans',sans-serif;color:#363e47;left:686.4px;letter-spacing:0.371px;">manifest.json</span>
<span class="t" style="top:823.37px;font:17px/0 'Liberation Sans',sans-serif;color:#363e47;left:669.9px;letter-spacing:0.573px;">webpack://</span>
</div></div>
<div class="L" style="left:915.5px;top:82px;width:25.5px;height:762px;"><div class="I" style="left:-915.5px;top:-82px">
<div style="left:915.6px;top:82px;width:23.4px;height:762px;background:#f1f1f1;"></div>
<div style="left:939px;top:82px;width:2px;height:762px;background:#ffffff;"></div>
<div style="left:916.6px;top:370px;width:21px;height:447.5px;background:#c1c1c1;"></div>
<svg style="left:921px;top:91px;" width="12" height="8" viewBox="0 0 12 8"><path d="M6 0.8 L11.4 6.6 H0.6 Z" fill="#505050"/></svg>
<svg style="left:921px;top:826px;" width="12" height="8" viewBox="0 0 12 8"><path d="M6 6.8 L11.4 1 H0.6 Z" fill="#a3a3a3"/></svg>
</div></div>
<div class="L" style="left:942px;top:82px;width:351px;height:720px;"><div class="I" style="left:-942px;top:-82px">
<div style="left:1002.6px;top:82px;width:1px;height:720px;background:#dcdcdc;"></div>
<div style="left:1004px;top:261.2px;width:290px;height:22.4px;background:#a0b0f8;"></div>
<svg style="left:942px;top:262.2px;" width="68" height="20.6" viewBox="0 0 68 20.6"><path d="M0 0 H60.6 L66.2 10.3 L60.6 20.6 H0 Z" fill="#4285f4"/></svg>
<span class="t" style="top:79.89px;font:16.5px/0 'Liberation Mono',monospace;color:#707070;right:858.4px;letter-spacing:-0.4px;">1</span>
<span class="t" style="top:79.89px;font:16.5px/0 'Liberation Mono',monospace;color:#ae1f97;left:1009.6px;">import</span>
<span class="t" style="top:79.89px;font:16.5px/0 'Liberation Mono',monospace;color:#2b2b2b;left:1069.01px;"> React </span>
<span class="t" style="top:79.89px;font:16.5px/0 'Liberation Mono',monospace;color:#ae1f97;left:1138.32px;">from</span>
<span class="t" style="top:79.89px;font:16.5px/0 'Liberation Mono',monospace;color:#2b2b2b;left:1177.93px;"> </span>
<span class="t" style="top:79.89px;font:16.5px/0 'Liberation Mono',monospace;color:#c41a16;left:1187.83px;">'react'</span>
<span class="t" style="top:79.89px;font:16.5px/0 'Liberation Mono',monospace;color:#2b2b2b;left:1257.14px;">;</span>
<span class="t" style="top:101.45px;font:16.5px/0 'Liberation Mono',monospace;color:#c4c4c4;right:858.4px;letter-spacing:-0.4px;">2</span>
<span class="t" style="top:123.01px;font:16.5px/0 'Liberation Mono',monospace;color:#707070;right:858.4px;letter-spacing:-0.4px;">3</span>
<span class="t" style="top:123.01px;font:16.5px/0 'Liberation Mono',monospace;color:#ae1f97;left:1009.6px;">import</span>
<span class="t" style="top:123.01px;font:16.5px/0 'Liberation Mono',monospace;color:#2b2b2b;left:1069.01px;"> </span>
<span class="t" style="top:123.01px;font:16.5px/0 'Liberation Mono',monospace;color:#c41a16;left:1078.91px;">'./CourseGoalItem.css'</span>
<span class="t" style="top:123.01px;font:16.5px/0 'Liberation Mono',monospace;color:#2b2b2b;left:1296.75px;">;</span>
<span class="t" style="top:144.57px;font:16.5px/0 'Liberation Mono',monospace;color:#c4c4c4;right:858.4px;letter-spacing:-0.4px;">4</span>
<span class="t" style="top:166.13px;font:16.5px/0 'Liberation Mono',monospace;color:#707070;right:858.4px;letter-spacing:-0.4px;">5</span>
<span class="t" style="top:166.13px;font:16.5px/0 'Liberation Mono',monospace;color:#ae1f97;left:1009.6px;">const</span>
<span class="t" style="top:166.13px;font:16.5px/0 'Liberation Mono',monospace;color:#2b2b2b;left:1059.11px;"> CourseGoalItem = props =&gt; {</span>
<span class="t" style="top:187.69px;font:16.5px/0 'Liberation Mono',monospace;color:#707070;right:858.4px;letter-spacing:-0.4px;">6</span>
<span class="t" style="top:187.69px;font:16.5px/0 'Liberation Mono',monospace;color:#2b2b2b;left:1009.6px;">  </span>
<span class="t" style="top:187.69px;font:16.5px/0 'Liberation Mono',monospace;color:#236e25;left:1029.4px;">// const [deleteText, setDeleteText] = useState('');</span>
<span class="t" style="top:209.25px;font:16.5px/0 'Liberation Mono',monospace;color:#c4c4c4;right:858.4px;letter-spacing:-0.4px;">7</span>
<span class="t" style="top:230.81px;font:16.5px/0 'Liberation Mono',monospace;color:#707070;right:858.4px;letter-spacing:-0.4px;">8</span>
<span class="t" style="top:230.81px;font:16.5px/0 'Liberation Mono',monospace;color:#2b2b2b;left:1009.6px;">  </span>
<span class="t" style="top:230.81px;font:16.5px/0 'Liberation Mono',monospace;color:#ae1f97;left:1029.4px;">const</span>
<span class="t" style="top:230.81px;font:16.5px/0 'Liberation Mono',monospace;color:#2b2b2b;left:1078.91px;"> deleteHandler = () =&gt; {</span>
<span class="t" style="top:252.37px;font:16.5px/0 'Liberation Mono',monospace;color:#c4c4c4;right:858.4px;letter-spacing:-0.4px;">9</span>
<span class="t" style="top:252.37px;font:16.5px/0 'Liberation Mono',monospace;color:#2b2b2b;left:1009.6px;">    </span>
<span class="t" style="top:252.37px;font:16.5px/0 'Liberation Mono',monospace;color:#236e25;left:1049.21px;">// setDeleteText('(Deleted!)');</span>
<span class="t" style="top:273.93px;font:bold 16.5px/0 'Liberation Mono',monospace;color:#ffffff;right:858px;">10</span>
<span class="t" style="top:273.93px;font:16.5px/0 'Liberation Mono',monospace;color:#1c2754;left:1009.6px;">    props.onDelete(props.id);</span>
<span class="t" style="top:295.49px;font:16.5px/0 'Liberation Mono',monospace;color:#707070;right:858.4px;letter-spacing:-0.4px;">11</span>
<span class="t" style="top:295.49px;font:16.5px/0 'Liberation Mono',monospace;color:#2b2b2b;left:1009.6px;">  };</span>
<span class="t" style="top:317.05px;font:16.5px/0 'Liberation Mono',monospace;color:#707070;right:858.4px;letter-spacing:-0.4px;">12</span>
<span class="t" style="top:338.61px;font:16.5px/0 'Liberation Mono',monospace;color:#707070;right:858.4px;letter-spacing:-0.4px;">13</span>
<span class="t" style="top:338.61px;font:16.5px/0 'Liberation Mono',monospace;color:#2b2b2b;left:1009.6px;">  </span>
<span class="t" style="top:338.61px;font:16.5px/0 'Liberation Mono',monospace;color:#ae1f97;left:1029.4px;">return</span>
<span class="t" style="top:338.61px;font:16.5px/0 'Liberation Mono',monospace;color:#2b2b2b;left:1088.81px;"> (</span>
<span class="t" style="top:360.17px;font:16.5px/0 'Liberation Mono',monospace;color:#707070;right:858.4px;letter-spacing:-0.4px;">14</span>
<span class="t" style="top:360.17px;font:16.5px/0 'Liberation Mono',monospace;color:#2b2b2b;left:1009.6px;">    &lt;</span>
<span class="t" style="top:360.17px;font:16.5px/0 'Liberation Mono',monospace;color:#881280;left:1059.11px;">li</span>
<span class="t" style="top:360.17px;font:16.5px/0 'Liberation Mono',monospace;color:#2b2b2b;left:1078.91px;"> </span>
<span class="t" style="top:360.17px;font:16.5px/0 'Liberation Mono',monospace;color:#994500;left:1088.81px;">className</span>
<span class="t" style="top:360.17px;font:16.5px/0 'Liberation Mono',monospace;color:#2b2b2b;left:1177.93px;">=</span>
<span class="t" style="top:360.17px;font:16.5px/0 'Liberation Mono',monospace;color:#1a1aa6;left:1187.83px;">"goal-item"</span>
<span class="t" style="top:360.17px;font:16.5px/0 'Liberation Mono',monospace;color:#2b2b2b;left:1296.75px;"> </span>
<span class="t" style="top:360.17px;font:16.5px/0 'Liberation Mono',monospace;color:#994500;left:1306.65px;">onClick</span>
<span class="t" style="top:360.17px;font:16.5px/0 'Liberation Mono',monospace;color:#2b2b2b;left:1375.96px;">={deleteHandler}&gt;</span>
<span class="t" style="top:381.73px;font:16.5px/0 'Liberation Mono',monospace;color:#c4c4c4;right:858.4px;letter-spacing:-0.4px;">15</span>
<span class="t" style="top:381.73px;font:16.5px/0 'Liberation Mono',monospace;color:#2b2b2b;left:1009.6px;">      {props.children}</span>
<span class="t" style="top:403.29px;font:16.5px/0 'Liberation Mono',monospace;color:#c4c4c4;right:858.4px;letter-spacing:-0.4px;">16</span>
<span class="t" style="top:403.29px;font:16.5px/0 'Liberation Mono',monospace;color:#2b2b2b;left:1009.6px;">    &lt;/</span>
<span class="t" style="top:403.29px;font:16.5px/0 'Liberation Mono',monospace;color:#881280;left:1069.01px;">li</span>
<span class="t" style="top:403.29px;font:16.5px/0 'Liberation Mono',monospace;color:#2b2b2b;left:1088.81px;">&gt;</span>
<span class="t" style="top:424.85px;font:16.5px/0 'Liberation Mono',monospace;color:#c4c4c4;right:858.4px;letter-spacing:-0.4px;">17</span>
<span class="t" style="top:424.85px;font:16.5px/0 'Liberation Mono',monospace;color:#2b2b2b;left:1009.6px;">  );</span>
<span class="t" style="top:446.41px;font:16.5px/0 'Liberation Mono',monospace;color:#707070;right:858.4px;letter-spacing:-0.4px;">18</span>
<span class="t" style="top:446.41px;font:16.5px/0 'Liberation Mono',monospace;color:#2b2b2b;left:1009.6px;">};</span>
<span class="t" style="top:467.97px;font:16.5px/0 'Liberation Mono',monospace;color:#707070;right:858.4px;letter-spacing:-0.4px;">19</span>
<span class="t" style="top:489.53px;font:16.5px/0 'Liberation Mono',monospace;color:#707070;right:858.4px;letter-spacing:-0.4px;">20</span>
<span class="t" style="top:489.53px;font:16.5px/0 'Liberation Mono',monospace;color:#ae1f97;left:1009.6px;">export</span>
<span class="t" style="top:489.53px;font:16.5px/0 'Liberation Mono',monospace;color:#2b2b2b;left:1069.01px;"> </span>
<span class="t" style="top:489.53px;font:16.5px/0 'Liberation Mono',monospace;color:#ae1f97;left:1078.91px;">default</span>
<span class="t" style="top:489.53px;font:16.5px/0 'Liberation Mono',monospace;color:#2b2b2b;left:1148.22px;"> CourseGoalItem;</span>
<span class="t" style="top:511.09px;font:16.5px/0 'Liberation Mono',monospace;color:#707070;right:858.4px;letter-spacing:-0.4px;">21</span>
</div></div>
<div class="L" style="left:942px;top:82px;width:376px;height:762px;"><div class="I" style="left:-942px;top:-82px">
<div style="left:1293px;top:82px;width:22.4px;height:720.5px;background:#f1f1f1;"></div>
<div style="left:1294.2px;top:119px;width:20.8px;height:415px;background:#c1c1c1;"></div>
<svg style="left:1298.5px;top:91px;" width="12" height="8" viewBox="0 0 12 8"><path d="M6 0.8 L11.4 6.6 H0.6 Z" fill="#505050"/></svg>
<svg style="left:1298.5px;top:785px;" width="12" height="8" viewBox="0 0 12 8"><path d="M6 6.8 L11.4 1 H0.6 Z" fill="#404040"/></svg>
<div style="left:942px;top:802.5px;width:351px;height:24px;background:#f1f1f1;"></div>
<div style="left:967px;top:803.5px;width:173.5px;height:21.5px;background:#c1c1c1;"></div>
<svg style="left:951px;top:808px;" width="8" height="12" viewBox="0 0 8 12"><path d="M6.8 0.6 V11.4 L1 6 Z" fill="#a3a3a3"/></svg>
<svg style="left:1276.5px;top:808px;" width="8" height="12" viewBox="0 0 8 12"><path d="M1.2 0.6 V11.4 L7 6 Z" fill="#404040"/></svg>
<div style="left:1293px;top:802.5px;width:22.4px;height:24px;background:#dcdcdc;"></div>
<div style="left:942px;top:826.5px;width:375px;height:1px;background:#cacaca;"></div>
<div style="left:942px;top:827.5px;width:375px;height:16.5px;background:#f3f3f3;"></div>
<span class="t" style="top:848.62px;font:bold 17px/0 'Liberation Sans',sans-serif;color:#555;left:958px;">{}</span>
<span class="t" style="top:848.62px;font:17px/0 'Liberation Sans',sans-serif;color:#444;left:999px;letter-spacing:0.500px;">Line 10, Column 1 (source mapped from bundle.js)</span>
</div></div>
<div class="L" style="left:697px;top:0px;width:1158px;height:844px;"><div class="I" style="left:-697px;top:0px">
<svg style="left:937.2px;top:248.2px;" width="361" height="41.8" viewBox="0 0 361 41.8"><rect x="2.4" y="2.4" width="356.2" height="37" fill="none" stroke="#ed1c24" stroke-width="4.8"/></svg>
<svg style="left:1409px;top:42px;" width="37.7" height="41.7" viewBox="0 0 37.7 41.7"><rect x="2" y="2" width="33.7" height="37.7" fill="none" stroke="#ed1c24" stroke-width="4"/></svg>
</div></div>
</body></html>
